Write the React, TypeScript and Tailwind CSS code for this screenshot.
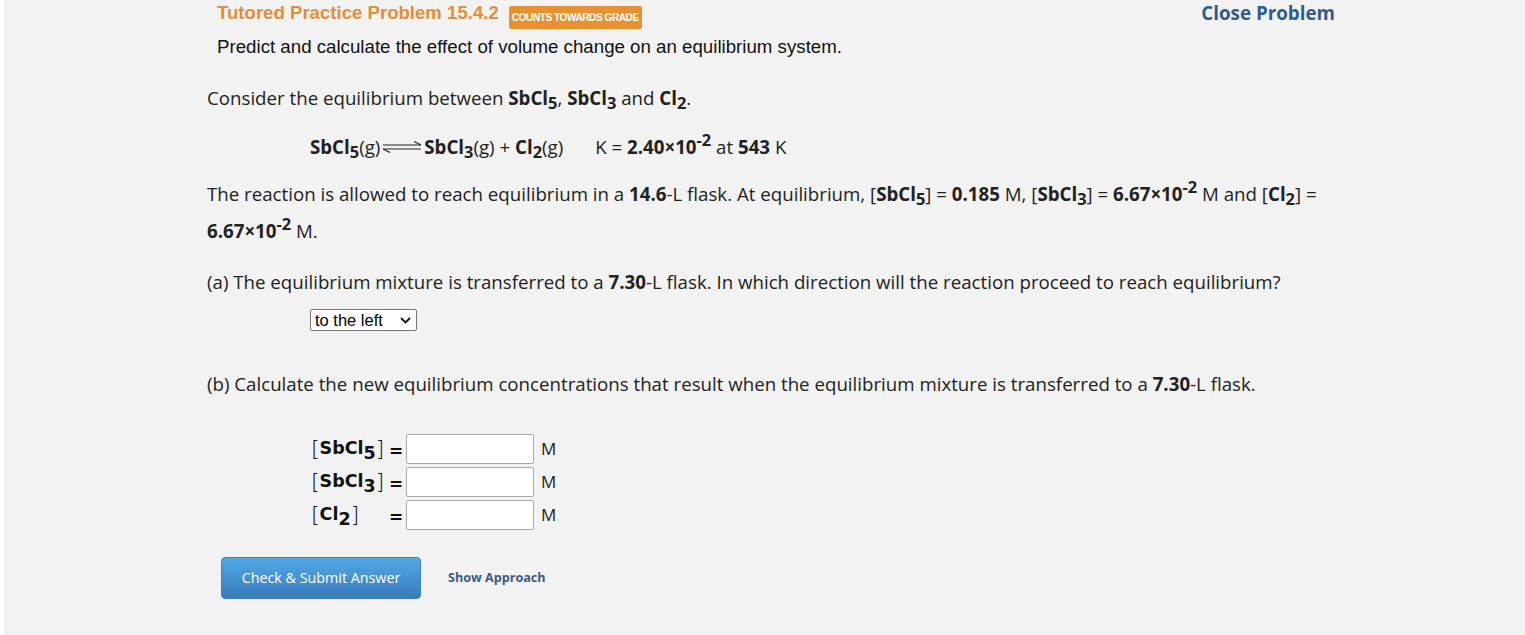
import React from "react";

const OS = { fontFamily: '"Open Sans", "Noto Sans", sans-serif' };
const AR = { fontFamily: '"Liberation Sans", Arial, sans-serif' };
const DV = { fontFamily: '"DejaVu Sans", Verdana, sans-serif' };

function Chem({ base, sub }: { base: string; sub: string }) {
  return (
    <b className="font-bold">
      {base}
      <sub className="text-[0.88em]">{sub}</sub>
    </b>
  );
}

function Sci({ m, e }: { m: string; e: string }) {
  return (
    <b className="font-bold">
      {m}×10<sup className="text-[0.88em]">{e}</sup>
    </b>
  );
}

function EqArrow() {
  return (
    <svg width="42" height="12" viewBox="0 0 42 12" className="inline-block align-middle mx-[1px]">
      <line x1="2" y1="4" x2="40" y2="4" stroke="#222" strokeWidth="1.2" />
      <path d="M33 0.5 L40 4" stroke="#222" strokeWidth="1.2" fill="none" />
      <line x1="2" y1="8" x2="40" y2="8" stroke="#222" strokeWidth="1.2" />
      <path d="M9 11.5 L2 8" stroke="#222" strokeWidth="1.2" fill="none" />
    </svg>
  );
}

function InputRow({ label, sub }: { label: string; sub: string }) {
  return (
    <div className="flex items-center h-[30px]" style={DV}>
      <div className="w-[78px] flex items-center text-[#111]">
        <span className="text-[22px] font-light leading-none">[</span>
        <b className="text-[17.5px] font-bold leading-none">
          {label}
          <sub className="text-[17.5px]">{sub}</sub>
        </b>
        <span className="text-[22px] font-light leading-none">]</span>
      </div>
      <div className="w-[17px] text-[17px] font-bold text-[#111] leading-none pt-[4px]">=</div>
      <input
        className="w-[128px] h-[30px] bg-white border border-[#aaa] rounded-[2px] outline-none"
        type="text"
      />
      <div className="ml-[7px] text-[17px] text-[#222]" style={OS}>
        M
      </div>
    </div>
  );
}

export default function App() {
  return (
    <div className="w-[1525px] h-[635px] bg-white pl-[4px] overflow-hidden">
      <div className="w-full h-full bg-[#f2f2f2] text-[#222]">
        <div className="ml-[203px] w-[1128px]">
          {/* header */}
          <div className="flex items-start justify-between pl-[10px] h-[26px]">
            <div className="flex items-start">
              <span className="text-[18.6px] font-bold leading-[26px] text-[#e28e3c]" style={AR}>
                Tutored Practice Problem 15.4.2
              </span>
              <span
                className="ml-[10px] mt-[6px] h-[23px] w-[133px] justify-center flex items-center rounded-[2px] bg-[#e8912f] text-white text-[10px] font-bold tracking-[-0.4px]"
                style={AR}
              >
                COUNTS TOWARDS GRADE
              </span>
            </div>
            <span className="text-[18.8px] font-bold leading-[26px] text-[#2f5b8e]" style={OS}>
              Close Problem
            </span>
          </div>

          <div className="pl-[10px] mt-[9px] text-[18.7px] leading-[24px] text-[#111]" style={AR}>
            Predict and calculate the effect of volume change on an equilibrium system.
          </div>

          <div style={OS} className="text-[18.7px]">
            <div className="mt-[27px] leading-[24px]">
              Consider the equilibrium between <Chem base="SbCl" sub="5" />, <Chem base="SbCl" sub="3" /> and{" "}
              <Chem base="Cl" sub="2" />.
            </div>

            <div className="mt-[25px] h-[24px] leading-[24px] pl-[103px] flex items-center">
              <span>
                <Chem base="SbCl" sub="5" />
                (g)
              </span>
              <EqArrow />
              <span>
                <Chem base="SbCl" sub="3" />
                (g) + <Chem base="Cl" sub="2" />
                (g)
              </span>
              <span className="ml-[32px]">
                K = <Sci m="2.40" e="-2" /> at <b className="font-bold">543</b> K
              </span>
            </div>

            <div className="mt-[16px] leading-[37px] w-[1128px]">
              The reaction is allowed to reach equilibrium in a <b className="font-bold">14.6</b>-L flask. At equilibrium, [
              <Chem base="SbCl" sub="5" />] = <b className="font-bold">0.185</b> M, [<Chem base="SbCl" sub="3" />] ={" "}
              <Sci m="6.67" e="-2" /> M and [<Chem base="Cl" sub="2" />] = <Sci m="6.67" e="-2" /> M.
            </div>

            <div className="mt-[21px] leading-[24px]">
              (a) The equilibrium mixture is transferred to a <b className="font-bold">7.30</b>-L flask. In which direction
              will the reaction proceed to reach equilibrium?
            </div>

            <div className="mt-[15px] pl-[103px]">
              <div
                className="w-[107px] h-[22px] bg-white border border-[#767676] rounded-[2px] flex items-center justify-between pl-[4px] pr-[5px] text-[16.5px] text-black"
                style={AR}
              >
                <span className="leading-none">to the left</span>
                <svg width="11" height="7" viewBox="0 0 11 7">
                  <path d="M1 1 L5.5 5.5 L10 1" stroke="#111" strokeWidth="1.8" fill="none" />
                </svg>
              </div>
            </div>

            <div className="mt-[41px] leading-[24px]">
              (b) Calculate the new equilibrium concentrations that result when the equilibrium mixture is transferred to a{" "}
              <b className="font-bold">7.30</b>-L flask.
            </div>

            <div className="mt-[38px] pl-[104px] flex flex-col gap-[3px]">
              <InputRow label="SbCl" sub="5" />
              <InputRow label="SbCl" sub="3" />
              <InputRow label="Cl" sub="2" />
            </div>

            <div className="mt-[27px] pl-[14px] flex items-center">
              <button
                className="w-[200px] h-[42px] rounded-[4px] text-white text-[14.3px] bg-gradient-to-b from-[#52a8e6] to-[#3a7bbd] border border-[#3b82c4]"
                style={OS}
              >
                Check &amp; Submit Answer
              </button>
              <span className="ml-[27px] text-[12.6px] font-bold text-[#3a5a8a]" style={OS}>
                Show Approach
              </span>
            </div>
          </div>
        </div>
      </div>
    </div>
  );
}
